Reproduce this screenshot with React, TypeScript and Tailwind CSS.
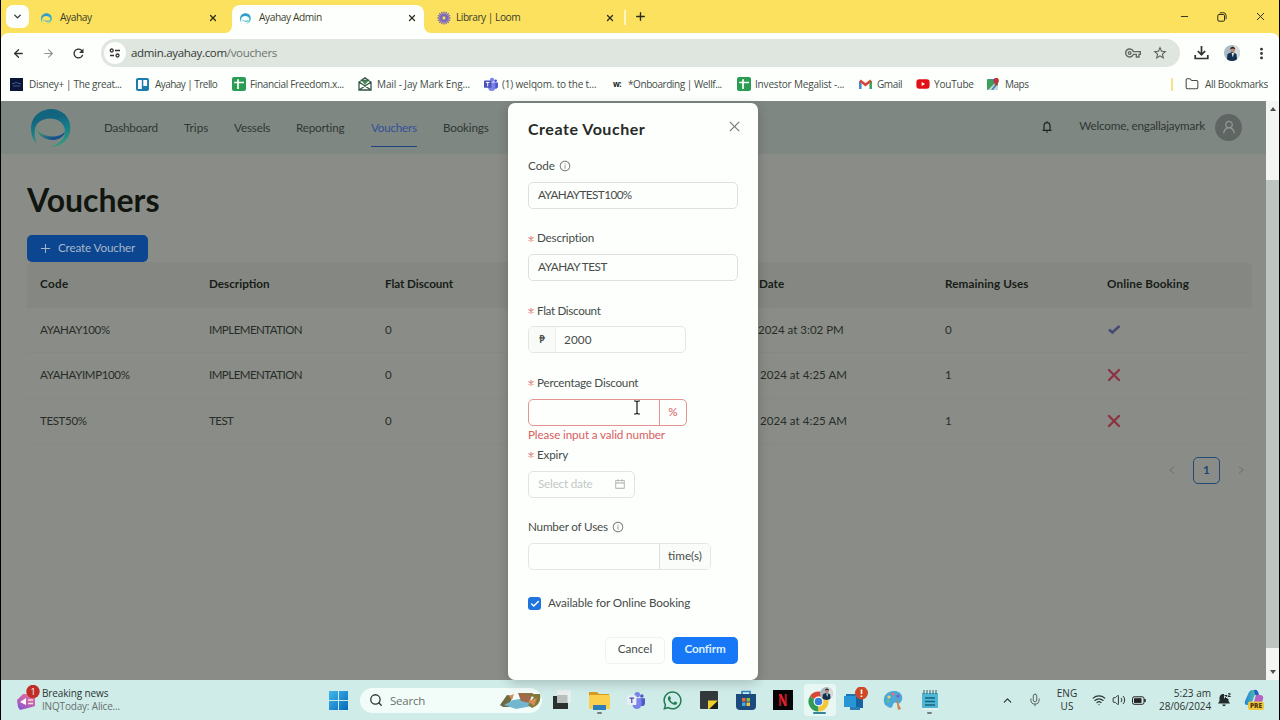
import type { ReactNode } from "react";
import { AiOutlineUser, AiOutlineInfoCircle, AiOutlineCalendar, AiOutlineLeft, AiOutlineRight, AiOutlineClose, AiOutlinePlus } from "react-icons/ai";
import { FaWhatsapp, FaYoutube } from "react-icons/fa";
import { MdStarBorder, MdOutlineVpnKey, MdRefresh } from "react-icons/md";
import { ArrowLeft, ArrowRight, Check, ChevronDown, ChevronUp, Folder, Minus, Plus, Search, X, Mic, Wifi, Volume2, EllipsisVertical } from "lucide-react";

function Swirl({ size, dim = false }: { size: number; dim?: boolean }) {
  return (
    <svg width={size} height={size} viewBox="0 0 40 40">
      <defs>
        <linearGradient id={dim ? "sd" : "sl"} x1="0.3" y1="0" x2="0.5" y2="1">
          <stop offset="0.25" stopColor={dim ? "#12647f" : "#2f9fcb"} />
          <stop offset="0.6" stopColor={dim ? "#16808a" : "#35b5cc"} />
          <stop offset="1" stopColor={dim ? "#2f9b7c" : "#4fd6b4"} />
        </linearGradient>
        <linearGradient id={dim ? "cd" : "cl"} x1="0" y1="0" x2="1" y2="0.5">
          <stop offset="0.2" stopColor={dim ? "#459b6b" : "#58d8b0"} />
          <stop offset="0.8" stopColor={dim ? "#15528c" : "#3b9fdc"} />
        </linearGradient>
      </defs>
      <path
        fillRule="evenodd"
        fill={dim ? "url(#sd)" : "url(#sl)"}
        d="M5.500 35.500C-2.500 27-1.500 12 7 5.500C15-1 27-.5 34 6.500C41 13.500 41 26 34.500 32.500C30.500 37 26 38.500 20.500 38.500C28 36 33.500 31 34 24.500C34.500 16 28 10.500 19 10.500C10 10.500 4.500 15.500 3.800 22C3.400 27 4 31 5.500 35.500Z"
      />
      <path fill={dim ? "url(#cd)" : "url(#cl)"} d="M5 18.500C7 25 14 28.500 21 28.500C27 28.500 32 26.500 34 23.500C33.500 28 28 32.500 21 32C12 31.500 5.500 26 5 18.500Z" />
    </svg>
  );
}

function Sheet() {
  return (
    <svg width="14" height="14" viewBox="0 0 14 14">
      <rect width="14" height="14" rx="2" fill="#2c9c55" />
      <path d="M6 2.200V12M2.200 5.500H12" stroke="#fff" strokeWidth="1.700" />
    </svg>
  );
}

function Teams({ size, light = false }: { size: number; light?: boolean }) {
  return (
    <svg width={size} height={size} viewBox="0 0 20 20">
      <circle cx="16.500" cy="5.500" r="2" fill="#5059c9" />
      <circle cx="11.500" cy="4" r="3" fill="#7b83eb" />
      <path d="M14 8h6v6a3 3 0 0 1-5 2z" fill="#5059c9" />
      <path d="M6 8h10v7a5 5 0 0 1-10 0z" fill="#7b83eb" />
      <rect x="0" y="5" width="10.500" height="10.500" rx="1" fill={light ? "#e9edf8" : "#4b53bc"} />
      <path d="M2.700 7.800h5.200M5.300 7.800v5.600" stroke={light ? "#4b53a0" : "#fff"} strokeWidth="1.400" />
    </svg>
  );
}

function Person({ size }: { size: number }) {
  return (
    <svg width={size} height={size} viewBox="0 0 18 18">
      <defs>
        <clipPath id="person">
          <circle cx="9" cy="9" r="9" />
        </clipPath>
      </defs>
      <g clipPath="url(#person)">
        <rect width="18" height="18" fill="#a9bac4" />
        <rect x="11" width="7" height="18" fill="#d5dcdd" />
        <path d="M3 18l1-8 5-2 5 2 1 8z" fill="#15304f" />
        <path d="M8.500 9l1.500 5 1.200-5z" fill="#e9eeee" />
        <circle cx="9.800" cy="5.500" r="2.700" fill="#b98b74" />
        <path d="M7 5c0-4 5.500-4 5.700 0C11 3.500 9 3.500 7 5z" fill="#2a211d" />
      </g>
    </svg>
  );
}

function Tab({ title, icon, active = false, width, track }: { title: string; icon: ReactNode; active?: boolean; width: string; track: string }) {
  return (
    <div className={`flex items-center ${width} ${active ? "relative h-[28px] rounded-t-[8px] bg-[#fdfffc]" : "h-[28px]"}`}>
      {active && (
        <>
          <svg className="absolute -left-[7px] bottom-0" width="7" height="7"><path d="M7 0V7H0A7 7 0 0 0 7 0Z" fill="#fdfffc" /></svg>
          <svg className="absolute -right-[7px] bottom-0" width="7" height="7"><path d="M0 0V7H7A7 7 0 0 1 0 0Z" fill="#fdfffc" /></svg>
        </>
      )}
      <span className="flex w-[27px] shrink-0 items-center pb-[2px] pl-[8px]">{icon}</span>
      <span className={`flex-1 pb-[2px] text-[10.2px] whitespace-nowrap text-[#403d2b] ${track}`}>{title}</span>
      <X size={10} strokeWidth={3} className="mr-[7px] mb-[2px] text-[#2c2b1d]" />
    </div>
  );
}

function Bookmark({ icon, label, width, track = "tracking-[-0.32px]" }: { icon: ReactNode; label: string; width: string; track?: string }) {
  return (
    <div className={`flex shrink-0 items-center text-[10px] whitespace-nowrap text-[#444b48] ${width}`}>
      <span className="flex w-[19px] shrink-0 items-center">{icon}</span>
      <span className={track}>{label}</span>
    </div>
  );
}

function Browser() {
  return (
    <>
      <div className="flex h-[38px] items-start bg-[#fbe15d] pl-[5px]">
        <div className="mt-[5px] flex h-[23px] w-[23px] items-center justify-center rounded-[7px] bg-[#fdfffc]">
          <ChevronDown size={11} strokeWidth={3} className="text-[#333]" />
        </div>
        <div className="mt-[5px] ml-[4px] flex">
          <Tab title="Ayahay" icon={<Swirl size={11} />} width="w-[192px]" track="tracking-[-0.4px]" />
          <span className="w-[7px]" />
          <Tab title="Ayahay Admin" icon={<Swirl size={11} />} active width="w-[192px]" track="tracking-[-0.42px]" />
          <span className="w-[5px]" />
          <Tab
            title="Library | Loom"
            width="w-[193px]"
            track="tracking-[-0.5px]"
            icon={
              <svg width="14" height="14" viewBox="-7 -7 14 14" stroke="#7766bd" strokeWidth="1.300" strokeLinecap="round">
                <path d="M0-6V6M-6 0H6M-4.300-4.300L4.300 4.300M-4.300 4.300L4.300-4.300M-2.300-5.600L2.300 5.600M2.300-5.600L-2.300 5.600M-5.600-2.300L5.600 2.300M-5.600 2.300L5.600-2.300" />
                <circle r="1.900" fill="#fbe15d" strokeWidth=".6" />
              </svg>
            }
          />
          <span className="mt-[5px] ml-[2px] h-[15px] w-[2px] bg-[#fff6c4]" />
          <span className="ml-[8px] flex items-center pb-[5px]"><Plus size={13} strokeWidth={2.5} className="text-[#2c2b1d]" /></span>
        </div>
        <div className="mt-[10px] ml-auto flex items-center text-[#2c2b1d]">
          <Minus size={11} strokeWidth={2} className="mr-[27px]" />
          <svg width="10" height="10" viewBox="0 0 10 10" fill="none" stroke="currentColor" className="mr-[27px]">
            <rect x=".8" y="2.500" width="6.700" height="6.700" rx="1.200" />
            <path d="M2.700 1C3.500.6 7 .5 8 1.200S9.400 5 9 7.200" />
          </svg>
          <X size={13} strokeWidth={1.8} className="mr-[12px]" />
        </div>
      </div>
      <div className="-mt-[5px] flex h-[68px] flex-col rounded-t-[7px] bg-[#fdfffc]">
        <div className="mt-[6px] flex h-[28px] items-center pl-[11px] text-[#2e3230]">
          <ArrowLeft size={13} strokeWidth={2.4} />
          <ArrowRight size={13} strokeWidth={2} className="ml-[17px] text-[#8e9290]" />
          <MdRefresh size={15} className="ml-[16px]" />
          <div className="ml-[15px] flex h-[28px] w-[1079px] items-center rounded-full bg-[#dfe5df] pl-[3px]">
            <span className="flex h-[22px] w-[22px] items-center justify-center rounded-full bg-[#fdfffc]">
              <svg width="12" height="10" viewBox="0 0 12 10" fill="none" stroke="#333" strokeWidth="1.300">
                <circle cx="2.700" cy="2.500" r="1.500" /><path d="M6 2.500h5M1 7.500h4" /><circle cx="8.500" cy="7.500" r="1.500" />
              </svg>
            </span>
            <span className="ml-[5px] text-[11.5px] tracking-[-0.32px] whitespace-nowrap text-[#333a36]">admin.ayahay.com<span className="text-[#6d7470]">/vouchers</span></span>
            <MdOutlineVpnKey size={16} className="mr-[11px] ml-auto text-[#626965]" />
            <MdStarBorder size={16} className="mr-[12px] text-[#59605c]" />
          </div>
          <svg width="15" height="14" viewBox="0 0 15 14" fill="none" stroke="currentColor" strokeWidth="1.700" className="ml-[14px]">
            <path d="M7.500 0V8.500M3.800 5L7.500 8.700L11.200 5M1.200 9V12.500H13.800V9" />
          </svg>
          <span className="ml-[15px]"><Person size={16} /></span>
          <EllipsisVertical size={15} strokeWidth={2.6} className="ml-[14px]" />
        </div>
        <div className="mt-[8px] flex h-[18px] items-center pl-[9px]">
          <Bookmark
            width="w-[126px]"
            label="Disney+ | The great..."
            icon={<svg width="13" height="13"><rect width="13" height="13" fill="#0a1538" /><path d="M2 6q4-3 9 0M3 8h7" stroke="#44679c" fill="none" strokeWidth=".9" /></svg>}
          />
          <Bookmark
            width="w-[96px]"
            label="Ayahay | Trello"
            track="tracking-[-0.55px]"
            icon={<svg width="13" height="13"><rect width="13" height="13" rx="2" fill="#1c7cae" /><rect x="2" y="2" width="3.800" height="9" fill="#fff" /><rect x="7.300" y="2" width="3.800" height="6" fill="#fff" /></svg>}
          />
          <Bookmark width="w-[126px]" label="Financial Freedom.x..." track="-ml-px tracking-[-0.33px]" icon={<Sheet />} />
          <Bookmark
            width="w-[126px]"
            label="Mail - Jay Mark Eng..."
            track="tracking-[-0.1px]"
            icon={
              <svg width="14" height="14" viewBox="0 0 14 14" fill="none" stroke="#365747" strokeWidth="1.300">
                <path d="M1 5L7 .8L13 5V13H1ZM1 5L13 13M13 5L1 13M2.500 3.500H11.500" /><path d="M3.500 3.500H10.500L7 8Z" fill="#4b8b55" stroke="none" />
              </svg>
            }
          />
          <Bookmark width="w-[127px]" label="(1) welqom. to the t..." track="-ml-px tracking-[-0.17px]" icon={<Teams size={14} />} />
          <Bookmark width="w-[126px]" label="*Onboarding | Wellf..." track="-ml-[2px] tracking-[-0.43px]" icon={<b className="pl-[2px] text-[8px] tracking-[-0.5px] text-[#222]">w:</b>} />
          <Bookmark width="w-[122px]" label="Investor Megalist -..." track="-ml-px tracking-[-0.18px]" icon={<Sheet />} />
          <Bookmark
            width="w-[57px]"
            label="Gmail"
            track="-ml-[1px] tracking-[-0.4px]"
            icon={<svg width="13" height="10" viewBox="0 0 13 10"><path d="M1.300 10V2" stroke="#4285c8" strokeWidth="2.500" /><path d="M11.700 10V2" stroke="#36a257" strokeWidth="2.500" /><path d="M1 1.500L6.500 5.800L12 1.500" fill="none" stroke="#d74639" strokeWidth="2.500" /></svg>}
          />
          <Bookmark width="w-[71px]" label="YouTube" track="-ml-px tracking-[-0.2px]" icon={<FaYoutube size={14} color="#e30f17" />} />
          <Bookmark
            width="w-[60px]"
            label="Maps"
            track="-ml-[1px] tracking-[-0.5px]"
            icon={<svg width="12" height="12" viewBox="0 0 12 12"><rect y="1" width="11" height="11" rx="1" fill="#3c9f5a" /><path d="M1 12L8 5L11 8V12Z" fill="#c9dbd5" /><path d="M3 1H11V6L6 12H4L9 5Z" fill="#4c82c4" /><path d="M9 8C7 5 6.500 4 6.500 2.500a2.700 2.700 0 0 1 5.400 0C12 4 11 5 9 8Z" fill="#b9363a" /></svg>}
          />
          <span className="ml-[124px] h-[13px] w-[2px] bg-[#f7e28a]" />
          <Bookmark width="ml-[12px]" label="All Bookmarks" track="ml-px tracking-[-0.28px]" icon={<Folder size={14} strokeWidth={1.8} />} />
        </div>
      </div>
    </>
  );
}

const nav = [
  { t: "Dashboard", c: "w-[54px]", k: "tracking-[-0.2px]" },
  { t: "Trips", c: "w-[24px]", k: "" },
  { t: "Vessels", c: "w-[36px]", k: "tracking-[-0.15px]" },
  { t: "Reporting", c: "w-[49px]", k: "tracking-[-0.2px]" },
  { t: "Vouchers", c: "w-[46px] text-[#35509a] border-b-[#1d437e]!", k: "tracking-[-0.25px]" },
  { t: "Bookings", c: "w-[46px]", k: "tracking-[-0.2px]" },
];

const rows = [
  { code: "AYAHAY100%", desc: "IMPLEMENTATION", date: "2024 at 3:02 PM", uses: "0", ok: true },
  { code: "AYAHAYIMP100%", desc: "IMPLEMENTATION", date: "2024 at 4:25 AM", uses: "1", ok: false },
  { code: "TEST50%", desc: "TEST", date: "2024 at 4:25 AM", uses: "1", ok: false },
];

const columns = "grid grid-cols-[169px_176px_374px_186px_162px_1fr] items-center pl-[13px] whitespace-nowrap";

function VouchersPage() {
  return (
    <div className="flex w-[1265px] flex-col bg-[#8a8d87] font-['Lato',sans-serif] text-[#272c28]">
      <header className="flex h-[53px] items-center bg-[#7f8783] pl-[30px] text-[11.7px] text-[#2f3733]">
        <Swirl size={40} dim />
        <nav className="ml-[33px] flex gap-[26px]">
          {nav.map((n) => (
            <span key={n.t} className={`flex h-[39px] items-center border-b border-b-transparent pt-[2px] whitespace-nowrap ${n.c} ${n.k}`}>{n.t}</span>
          ))}
        </nav>
        <svg width="10" height="12" viewBox="0 0 10 12" className="mb-[2px] ml-auto" fill="none" stroke="#1d2420" strokeWidth="1.200">
          <path d="M2 9V5C2 .6 8 .6 8 5V9M.5 9.300H9.500M4 11H6M5 .3V1.600" />
        </svg>
        <span className="ml-[27px] pb-[3px] tracking-[-0.18px]">Welcome, engallajaymark</span>
        <span className="mr-[24px] ml-[10px] flex h-[27px] w-[27px] items-center justify-center rounded-full bg-[#5f6562] pb-[2px] text-[#949a96]">
          <AiOutlineUser size={16} />
        </span>
      </header>
      <main className="pr-[14px] pl-[26px]">
        <h1 className="mt-[25px] h-[42px] text-[32px] leading-[42px] font-bold tracking-[-0.02px] text-[#10150f]">Vouchers</h1>
        <button className="mt-[13.5px] flex h-[27px] w-[121px] items-center rounded-[5px] bg-[#0d4690] pl-[12px] text-[11.7px] text-[#a8b7c8]">
          <AiOutlinePlus size={13} />
          <span className="ml-[6px] tracking-[-0.15px] whitespace-nowrap">Create Voucher</span>
        </button>
        <div className={`${columns} h-[46px] rounded-t-[6px] bg-[#858882] pb-[2px] text-[11.7px] font-bold text-[#171c17]`}>
          <span className="tracking-[0.35px]">Code</span><span>Description</span><span className="tracking-[-0.08px]">Flat Discount</span><span>Date</span><span className="tracking-[0.1px]">Remaining Uses</span><span className="tracking-[0.1px]">Online Booking</span>
        </div>
        {rows.map((r) => (
          <div key={r.code} className={`${columns} h-[45.7px] border-b border-[#868983] pb-px text-[11.5px]`}>
            <span className="tracking-[-0.35px]">{r.code}</span>
            <span className="tracking-[-0.52px]">{r.desc}</span>
            <span>0</span>
            <span className={r.ok ? "-ml-[1px]" : "ml-px tracking-[0.05px]"}>{r.date}</span>
            <span>{r.uses}</span>
            <span>
              {r.ok ? (
                <svg width="14" height="14" viewBox="0 0 14 14"><path d="M2 7.500L5.300 10.500L12.500 4" fill="none" stroke="#454a73" strokeWidth="2.600" /></svg>
              ) : (
                <svg width="14" height="14" viewBox="0 0 14 14"><path d="M2 2L12 12M12 2L2 12" fill="none" stroke="#8b3243" strokeWidth="2.300" strokeLinecap="round" /></svg>
              )}
            </span>
          </div>
        ))}
        <div className="mt-[12px] flex items-center justify-end pr-[6px] text-[#6e726c]">
          <AiOutlineLeft size={10} />
          <span className="mx-[16px] flex h-[27px] w-[27px] items-center justify-center rounded-[5px] border border-[#234872] pb-px text-[11.7px] font-bold text-[#1c4375]">1</span>
          <AiOutlineRight size={10} />
        </div>
      </main>
    </div>
  );
}

function Field({ label, required = false, info = false, error, children, track = "tracking-[-0.2px]" }: { label: string; required?: boolean; info?: boolean; error?: string; children: ReactNode; track?: string }) {
  return (
    <div className="h-[72.2px] text-[11.7px]">
      <div className="flex h-[18px] items-center pb-[2px] whitespace-nowrap">
        {required && (
          <svg width="6" height="6" viewBox="-3 -3 6 6" className="mt-px mr-[3px]" stroke="#e58a88" strokeWidth="1.100"><path d="M0-3V3M-2.600-1.500L2.600 1.500M-2.600 1.500L2.600-1.500" /></svg>
        )}
        <span className={track}>{label}</span>
        {info && <AiOutlineInfoCircle size={12} className="ml-[4px] text-[#777c79]" />}
      </div>
      <div className="mt-[6px] flex h-[27px]">{children}</div>
      {error && <div className="h-[18px] leading-[17px] tracking-[-0.13px] whitespace-nowrap text-[#d9605f]">{error}</div>}
    </div>
  );
}

function Modal() {
  return (
    <section className="flex h-[577px] w-[250px] flex-col rounded-[7px] bg-[#fdfffd] px-[20px] font-['Lato',sans-serif] text-[#474c49] shadow-[0_3px_12px_rgba(0,0,0,0.2)]">
      <div className="mt-[10px] flex h-[32px] items-center justify-between">
        <h2 className="text-[16px] font-bold tracking-[0.53px] text-[#262a28]">Create Voucher</h2>
        <AiOutlineClose size={15} className="-mt-[6px] -mr-[4px] text-[#777c79]" />
      </div>
      <div className="mt-[13px]">
        <Field label="Code" info track="">
          <div className="flex w-[210px] items-center rounded-[5px] border border-[#dde1de] pb-[2px] pl-[9px] tracking-[-0.55px]">AYAHAYTEST100%</div>
        </Field>
        <Field label="Description" required>
          <div className="flex w-[210px] items-center rounded-[5px] border border-[#dde1de] pb-px pl-[9px] tracking-[-0.45px]">AYAHAY TEST</div>
        </Field>
        <Field label="Flat Discount" required track="tracking-[-0.35px]">
          <div className="flex w-[158px] items-center rounded-[5px] border border-[#e3e7e4]">
            <span className="flex h-full w-[27px] items-center justify-center rounded-l-[4px] border-r border-[#eef0ee] bg-[#f9fbf9]">
              <span className="font-['Noto_Sans',sans-serif] text-[10px] font-semibold">₱</span>
            </span>
            <span className="pb-px pl-[8px] tracking-[0.15px]">2000</span>
          </div>
        </Field>
        <Field label="Percentage Discount" required error="Please input a valid number" track="tracking-[-0.25px]">
          <div className="flex w-[159px] items-center rounded-[5px] border border-[#e59391]">
            <span className="flex-1" />
            <span className="flex h-full w-[27px] items-center justify-center border-l border-[#e59391] text-[#d9605f]">%</span>
          </div>
        </Field>
        <Field label="Expiry" required>
          <div className="flex w-[107px] items-center justify-between rounded-[5px] border border-[#e0e4e1] pr-[8px] pl-[9px] text-[#c3c8c5]">
            <span className="tracking-[-0.2px]">Select date</span>
            <AiOutlineCalendar size={12} className="text-[#a5aaa7]" />
          </div>
        </Field>
        <Field label="Number of Uses" info track="tracking-[-0.2px]">
          <div className="flex w-[183px] items-center rounded-[5px] border border-[#e3e7e4]">
            <span className="flex-1" />
            <span className="flex h-full w-[51px] items-center justify-center rounded-r-[4px] border-l border-[#dde1de] bg-[#fafcfa] pb-px">time(s)</span>
          </div>
        </Field>
      </div>
      <label className="flex h-[25px] items-center text-[11.7px]">
        <span className="flex h-[13px] w-[13px] items-center justify-center rounded-[3px] bg-[#1f74df]"><Check size={10} strokeWidth={3.5} color="#fff" /></span>
        <span className="ml-[7px] pb-[2px] tracking-[-0.12px] whitespace-nowrap">Available for Online Booking</span>
      </label>
      <div className="mt-[20.500px] flex justify-end gap-[7px] text-[11.7px]">
        <button className="flex h-[27px] w-[60px] items-center justify-center rounded-[5px] border border-[#eff2ef] pb-[2px]">Cancel</button>
        <button className="flex h-[27px] w-[66px] items-center justify-center rounded-[5px] bg-[#1677f7] pb-[2px] font-bold tracking-[-0.15px] text-[#dcf0ff]">Confirm</button>
      </div>
    </section>
  );
}

function Cell({ children, on = false, mark = "" }: { children: ReactNode; on?: boolean; mark?: string }) {
  return (
    <div className="flex h-[32px] w-[36.75px] justify-center">
      <div className={`flex h-[32px] w-[32px] flex-col items-center pt-[4px] ${on ? "rounded-[4px] bg-[#e9f7f4]" : ""}`}>
        <div className="flex h-[24px] items-center">{children}</div>
        {mark && <span className={`h-[2px] rounded-full ${mark}`} />}
      </div>
    </div>
  );
}

function Taskbar() {
  return (
    <footer className="flex h-[40px] items-center bg-[#d0ece8] text-[10px] leading-[13px] whitespace-nowrap text-[#2c3533]">
      <svg width="26" height="30" viewBox="0 0 26 30" className="ml-[14px]">
        <defs><linearGradient id="news" x1="0.8" y1="0" x2="0.2" y2="1"><stop stopColor="#ef6f9a" /><stop offset="1" stopColor="#8756cf" /></linearGradient></defs>
        <path d="M2 15L8 9H18Q20 9 20 12V21L17 22L5 25L3 22Z" fill="url(#news)" />
        <path d="M5 17L11 13V20Z" fill="#fff" /><path d="M13 15H18M13 18.500H18" stroke="#fadcd6" strokeWidth="1.600" />
        <circle cx="18" cy="6.500" r="6.700" fill="#bf2d29" />
        <text x="18" y="10" textAnchor="middle" fontSize="9" fill="#fff">1</text>
      </svg>
      <div className="ml-[1px] w-[287px]"><div className="tracking-[-0.12px]">Breaking news</div><div className="tracking-[-0.18px] text-[#65706d]">INQToday: Alice...</div></div>
      <svg width="19" height="19" viewBox="0 0 19 19">
        <defs><linearGradient id="win" x1="0" y1="0" x2="1" y2="1"><stop stopColor="#43b8ec" /><stop offset="1" stopColor="#0568bd" /></linearGradient></defs>
        <path d="M0 0H9V9H0ZM10 0H19V9H10ZM0 10H9V19H0ZM10 10H19V19H10Z" fill="url(#win)" />
      </svg>
      <div className="ml-[12px] flex h-[25px] w-[182px] items-center rounded-full bg-[#f2fdfa] pl-[9px]">
        <Search size={14} strokeWidth={2.2} />
        <span className="ml-[7px] text-[11.5px] tracking-[-0.2px] text-[#68716e]">Search</span>
        <svg width="42" height="17" viewBox="0 0 42 17" className="mr-[1px] ml-auto">
          <path d="M1 13L8 3L14 4L11 11L20 15H4Z" fill="#6f6a43" />
          <path d="M5 13L14 8L28 6L33 14L17 17Z" fill="#73b7cf" />
          <path d="M19 1H34L30 11L22 9Z" fill="#a16a49" />
          <path d="M24 2H41Q43 12 33 16L29 13L35 5Z" fill="#7f7a3c" />
          <path d="M10 4L15 2L13 8ZM29 9L38 6L35 14Z" fill="#d88c54" />
        </svg>
      </div>
      <div className="ml-[2px] flex">
        <Cell><svg width="20" height="20" viewBox="0 0 20 20"><rect x="1" y="6" width="15" height="13" fill="#2b302f" /><rect x="5" y="0" width="14" height="13" fill="#e8eeec" /><path d="M5 5H15.500V13H5Z" fill="#b9bfbd" /></svg></Cell>
        <Cell mark="w-[5px] bg-[#75817e]">
          <svg width="21" height="19" viewBox="0 0 21 19"><path d="M0 1H8L10 3H20V8H0Z" fill="#d69a1f" /><rect y="4" width="21" height="14" rx="1" fill="#fbd04c" /><path d="M4 14H17V19H4Z" fill="#2c7dbb" /></svg>
        </Cell>
        <Cell><Teams size={18} light /></Cell>
        <Cell><FaWhatsapp size={21} color="#257c55" /></Cell>
        <Cell><svg width="18" height="18"><rect width="18" height="18" rx="1" fill="#33383a" /><path d="M8 9.500H18L9 18H8Z" fill="#f3cf2e" /><path d="M18 10L10 18H18Z" fill="#1c1f20" /></svg></Cell>
        <Cell>
          <svg width="20" height="20" viewBox="0 0 20 20"><path d="M6 5V1.500H14V5" fill="none" stroke="#3385c4" strokeWidth="1.700" /><path d="M0 4H20V16Q20 20 16 20H4Q0 20 0 16Z" fill="#1b4b7c" /><path d="M6 8H9.500V11.500H6Z" fill="#e86b46" /><path d="M10.500 8H14V11.500H10.500Z" fill="#8bbd49" /><path d="M6 12.500H9.500V16H6Z" fill="#49a8e0" /><path d="M10.500 12.500H14V16H10.500Z" fill="#f0c342" /></svg>
        </Cell>
        <Cell><svg width="20" height="20"><rect width="20" height="20" fill="#080506" /><path d="M7.200 4V16M12.800 4V16" stroke="#ad1620" strokeWidth="2.200" /><path d="M6 4H8.500L14 16H11.500Z" fill="#e5222e" /></svg></Cell>
        <Cell on mark="w-[13px] bg-[#36849a]">
          <div className="relative mt-[2px] ml-[-2px]">
            <svg width="21" height="21" viewBox="-10.500 -10.500 21 21">
              <path d="M0 0L-8.700-5A10 10 0 0 1 8.700-5Z" fill="#d9473b" />
              <path d="M0 0L-8.700-5A10 10 0 0 0 0 10Z" fill="#2f9c53" />
              <path d="M0 0L0 10A10 10 0 0 0 8.700-5H0Z" fill="#f5c836" />
              <circle r="4.900" fill="#fff" /><circle r="3.800" fill="#347dd6" />
            </svg>
            <span className="absolute -top-[4px] -right-[4px]"><Person size={13} /></span>
          </div>
        </Cell>
        <Cell>
          <svg width="26" height="26" viewBox="0 0 26 26"><path d="M3 7H16V18H3Z" fill="#1676b9" /><path d="M9 10H20V21H9Z" fill="#1762a0" /><path d="M1 9H13V20H1Z" fill="#2896d5" /><path d="M7 20H17V23H7Z" fill="#287fb7" /><circle cx="18.500" cy="6" r="6.500" fill="#cf4825" /><path d="M18.500 2.500V7M18.500 8.500V10" stroke="#fff" strokeWidth="1.600" /></svg>
        </Cell>
        <Cell>
          <svg width="20" height="20" viewBox="0 0 20 20"><path d="M2 15C-2 6 5 0 12 1C20 2 21 9 17 13C14 15 13 11 11 13C9 15 10 18 7 18Z" fill="#4ca8d8" /><circle cx="6" cy="7" r="1.600" fill="#f5d260" /><circle cx="10" cy="4" r="1.600" fill="#e6706c" /><circle cx="15" cy="6" r="1.600" fill="#8759b8" /><circle cx="5" cy="11" r="1.500" fill="#5fc47c" /><path d="M13 8L18 19L15 20Z" fill="#cf8350" /></svg>
        </Cell>
        <Cell mark="w-[5px] bg-[#75817e]">
          <svg width="16" height="21" viewBox="0 0 16 21"><path d="M0 3H16V19H0Z" fill="#4fb6d4" /><path d="M0 18H16V20H0Z" fill="#e9efe9" /><path d="M2 0V4M5 0V4M8 0V4M11 0V4M14 0V4" stroke="#315d6c" /><path d="M3 8H13M3 11.500H13M3 15H13" stroke="#17617f" strokeWidth="1.300" /></svg>
        </Cell>
      </div>
      <div className="ml-auto flex items-center pr-[14px]">
        <ChevronUp size={13} strokeWidth={2.2} />
        <Mic size={14} strokeWidth={1.7} className="ml-[14px] text-[#59625f]" />
        <div className="ml-[12px] w-[26px] text-center"><div>ENG</div><div>US</div></div>
        <Wifi size={14} strokeWidth={2} className="ml-[12px]" />
        <Volume2 size={14} strokeWidth={1.7} className="ml-[6px]" />
        <svg width="14" height="9" viewBox="0 0 14 9" className="ml-[6px]"><rect x=".5" y=".8" width="11.500" height="7.500" rx="1.700" fill="none" stroke="#222" /><rect x="2" y="2.200" width="7.500" height="4.700" fill="#222" /><path d="M13 3V6" stroke="#222" strokeWidth="1.500" /></svg>
        <div className="ml-[13px] w-[52px] text-right"><div>5:23 am</div><div className="flex justify-end tracking-[-0.12px]">28/06/2024</div></div>
        <svg width="13" height="14" viewBox="0 0 13 14" className="ml-[7px]"><path d="M0 10.500L1.500 8V5.500C1.500 1.500 4 .8 6 1V6H10.500V8L12 10.500ZM4 11.500H8Q6 15 4 11.500Z" fill="#222b29" /><path d="M6.500 2.500H9L6.500 5.500H9.500M10 .8H12.500L10 3.500H12.700" fill="none" stroke="#222b29" /></svg>
        <svg width="22" height="22" viewBox="0 0 22 22" className="ml-[12px]">
          <defs><linearGradient id="co" x1="0" x2="1"><stop stopColor="#2684db" /><stop offset="1" stopColor="#54c5a4" /></linearGradient></defs>
          <path d="M6 3Q7 1 10 1H14L11 8L8 16H4Q1 16 2 12Z" fill="url(#co)" /><path d="M13 6H17Q21 6 20 10L18 16H10Z" fill="#b463c4" /><path d="M11 1Q15 0 16 6H12Z" fill="#2860c0" />
          <rect x="5" y="12.500" width="16" height="8.500" rx="2" fill="#f0c73b" /><text x="13" y="19.300" textAnchor="middle" fontSize="6.500" fontWeight="800" fill="#4c3a13">PRE</text>
        </svg>
      </div>
    </footer>
  );
}

export default function App() {
  return (
    <div className="h-[720px] w-[1280px] overflow-hidden border-x border-black bg-[#fdfffc] font-['Open_Sans','Noto_Sans',sans-serif]">
      <Browser />
      <div className="relative flex h-[579px]">
        <VouchersPage />
        <aside className="flex flex-1 flex-col items-center bg-[#f2f5f1]">
          <svg width="6" height="4" className="mt-[6px] shrink-0"><path d="M0 4L3 0L6 4Z" fill="#4a4e4c" /></svg>
          <span className="mt-[69px] h-[468px] w-full shrink-0 bg-[#bec4bf]" />
          <svg width="6" height="4" className="mt-[22px] shrink-0"><path d="M0 0L3 4L6 0Z" fill="#4a4e4c" /></svg>
        </aside>
        <div className="absolute top-[2px] left-[507px]">
          <Modal />
          <svg width="8" height="15" viewBox="0 0 8 15" className="absolute top-[297px] left-[125px]"><path d="M1 1H3L4 2L5 1H7M4 2V13M1 14H3L4 13L5 14H7" fill="none" stroke="#161816" strokeWidth="1.200" /></svg>
        </div>
      </div>
      <Taskbar />
    </div>
  );
}
